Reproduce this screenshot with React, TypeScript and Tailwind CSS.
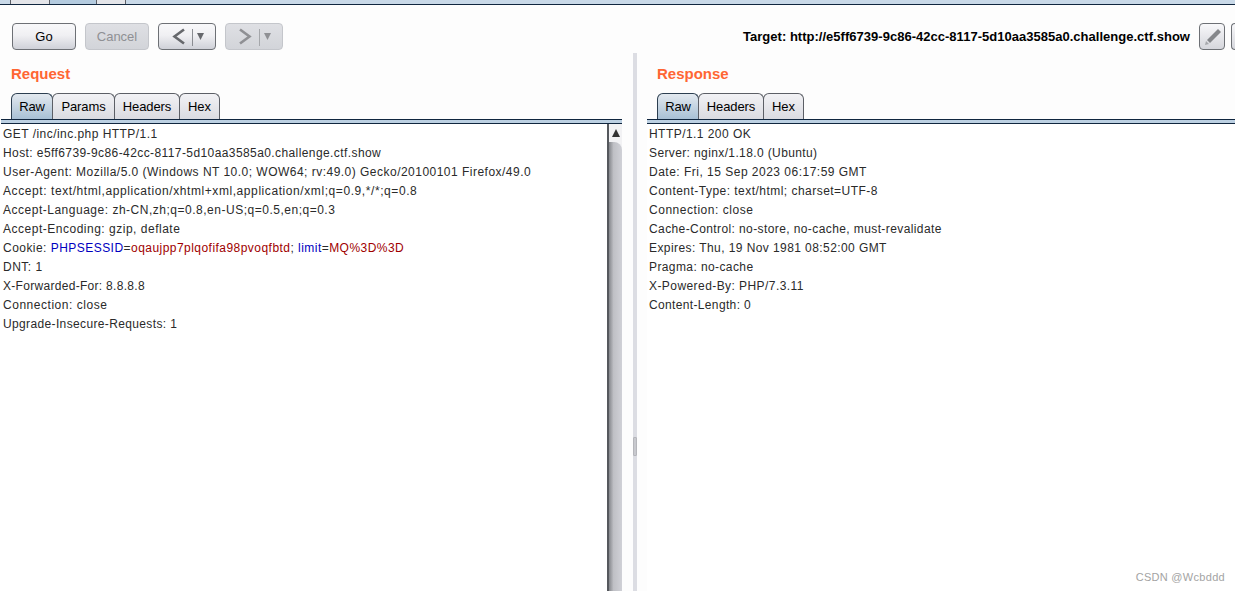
import type { ReactNode } from "react";

const font = "font-['Liberation_Sans',Arial,sans-serif]";

// the reference text was hinted on Windows, so each line gets its own spacing to hit the same width
const requestLines: [string, string][] = [
  ["GET /inc/inc.php HTTP/1.1", "tracking-[0.46px]"],
  ["Host: e5ff6739-9c86-42cc-8117-5d10aa3585a0.challenge.ctf.show", "tracking-[0.41px]"],
  ["User-Agent: Mozilla/5.0 (Windows NT 10.0; WOW64; rv:49.0) Gecko/20100101 Firefox/49.0", "tracking-[0.48px]"],
  ["Accept: text/html,application/xhtml+xml,application/xml;q=0.9,*/*;q=0.8", "tracking-[0.58px]"],
  ["Accept-Language: zh-CN,zh;q=0.8,en-US;q=0.5,en;q=0.3", "tracking-[0.51px]"],
  ["Accept-Encoding: gzip, deflate", "tracking-[0.51px]"],
];

const requestTail: [string, string][] = [
  ["DNT: 1", "tracking-[0.48px]"],
  ["X-Forwarded-For: 8.8.8.8", "tracking-[0.3px]"],
  ["Connection: close", "tracking-[0.53px]"],
  ["Upgrade-Insecure-Requests: 1", "tracking-[0.36px]"],
];

const responseLines: [string, string][] = [
  ["HTTP/1.1 200 OK", "tracking-[0.45px]"],
  ["Server: nginx/1.18.0 (Ubuntu)", "tracking-[0.38px]"],
  ["Date: Fri, 15 Sep 2023 06:17:59 GMT", "tracking-[0.49px]"],
  ["Content-Type: text/html; charset=UTF-8", "tracking-[0.47px]"],
  ["Connection: close", "tracking-[0.53px]"],
  ["Cache-Control: no-store, no-cache, must-revalidate", "tracking-[0.4px]"],
  ["Expires: Thu, 19 Nov 1981 08:52:00 GMT", "tracking-[0.42px]"],
  ["Pragma: no-cache", "tracking-[0.4px]"],
  ["X-Powered-By: PHP/7.3.11", "tracking-[0.43px]"],
  ["Content-Length: 0", "tracking-[0.35px]"],
];

function ToolButton({ children, disabled, width }: { children: ReactNode; disabled?: boolean; width: string }) {
  return (
    <div
      className={`flex h-[27px] ${width} shrink-0 items-center justify-center rounded-[4px] border text-[13px] ${
        disabled
          ? "border-[#c4c6cb] bg-[linear-gradient(#dfe0e4,#d2d4d9)] text-[#8f9094]"
          : "border-[#6d7075] bg-[linear-gradient(#f8f8fa,#f0f0f3_45%,#cfd1d8)] text-black"
      }`}
    >
      {children}
    </div>
  );
}

function ArrowButton({ dir, disabled }: { dir: "left" | "right"; disabled?: boolean }) {
  const color = disabled ? "#8f9094" : "#66686c";
  return (
    <ToolButton disabled={disabled} width="w-[58px]">
      <svg width="56" height="25" viewBox="0 0 56 25" fill="none">
        <path
          d={dir === "left" ? "M25 5.5 L15.5 12.5 L25 19.5" : "M14 5.5 L23.5 12.5 L14 19.5"}
          stroke={color}
          strokeWidth="2.6"
        />
        <path d="M33.5 5 V22" stroke={disabled ? "#a5a7ab" : "#8b8d92"} />
        <path d="M38 9 H45 L41.5 16 Z" fill={color} />
      </svg>
    </ToolButton>
  );
}

function Tabs({ labels }: { labels: [string, number][] }) {
  return (
    <div className="flex h-[26px] items-end">
      {labels.map(([label, w], i) => (
        <div
          key={label}
          style={{ width: w }}
          className={`flex h-[26px] shrink-0 items-center justify-center rounded-t-[6px] border border-b-0 pt-[1px] text-[13px] tracking-[-0.1px] text-black ${
            i === 0
              ? "border-[#2c3e50] bg-[linear-gradient(#e3e9ef,#a8c0d5)]"
              : "-ml-px border-[#5c5f66] bg-[linear-gradient(#f2f2f5,#dadbe1)]"
          }`}
        >
          {label}
        </div>
      ))}
    </div>
  );
}

function Rule() {
  return <div className="h-[5px] shrink-0 border-y border-y-[#10263f] bg-[#bcd0e2]" />;
}

function Line({ children, tracking }: { children: ReactNode; tracking: string }) {
  return <div className={`h-[19px] whitespace-nowrap leading-[19px] ${tracking}`}>{children}</div>;
}

function Scrollbar() {
  return (
    <div className="flex w-[15px] shrink-0 flex-col border-l-2 border-l-[#55585d] bg-[#f2f2f4]">
      <div className="flex h-[18px] shrink-0 items-center justify-center">
        <div className="h-0 w-0 border-x-[4px] border-b-[8px] border-x-transparent border-b-[#333]" />
      </div>
      <div className="flex-1 rounded-tr-[8px] bg-[linear-gradient(90deg,#85878c,#bfc0c5_35%,#d0d1d7)]" />
    </div>
  );
}

export default function App() {
  return (
    <div className={`${font} flex h-[591px] w-[1235px] flex-col overflow-hidden bg-[#fdfdfd] text-[#2a2a2a]`}>
      {/* top tab strip, cut off by the crop */}
      <div className="flex h-[6px] shrink-0 flex-col bg-[#fdfdfd]">
        <div className="flex h-[4px] items-start bg-[#c9d9e8] pl-[10px]">
          <div className="h-[4px] w-[40px] border-x border-[#5c5f66] bg-[#e4e5e9]" />
          <div className="h-[4px] w-[46px] bg-[#b4cbdf]" />
          <div className="h-[4px] w-[30px] border-x border-[#5c5f66] bg-[#e4e5e9]" />
        </div>
        <div className="h-[1px] bg-[#10263f]" />
      </div>

      <div className="flex h-[47px] shrink-0 items-start pl-[12px] pt-[17px]">
        <ToolButton width="w-[64px]">Go</ToolButton>
        <div className="ml-[9px]">
          <ToolButton disabled width="w-[64px]">Cancel</ToolButton>
        </div>
        <div className="ml-[9px]">
          <ArrowButton dir="left" />
        </div>
        <div className="ml-[9px]">
          <ArrowButton dir="right" disabled />
        </div>
        <div className="ml-auto flex items-center">
          <span className="text-[13px] font-bold leading-[27px] tracking-[0.02px] text-black">
            Target: http://e5ff6739-9c86-42cc-8117-5d10aa3585a0.challenge.ctf.show
          </span>
          <div className="ml-[9px] flex h-[27px] w-[26px] items-center justify-center rounded-[4px] border border-[#6d7075] bg-[linear-gradient(#f8f8fa,#d5d6dc)]">
            <svg width="24" height="25" viewBox="0 0 24 25">
              <path d="M18 5 L21 8 L10 19 L7 16 Z" fill="#85878b" />
              <path d="M6 17 L9 20 L5 21 Z" fill="#a5a7ab" />
            </svg>
          </div>
          <div className="ml-[6px] h-[27px] w-[4px] rounded-l-[4px] border border-r-0 border-[#6d7075] bg-[linear-gradient(#f8f8fa,#d5d6dc)]" />
        </div>
      </div>

      <div className="flex min-h-0 flex-1">
        <div className="flex w-[622px] shrink-0 flex-col">
          <div className="pl-[11px] pt-[12px] text-[15px] font-bold leading-[17px] text-[#ff6633]">Request</div>
          <div className="ml-[11px] mt-[11px]">
            <Tabs labels={[["Raw", 42], ["Params", 63], ["Headers", 66], ["Hex", 41]]} />
          </div>
          <div className="ml-px">
            <Rule />
          </div>
          <div className="flex min-h-0 flex-1">
            <div className="min-w-0 flex-1 overflow-hidden bg-white pl-[3px] pt-px text-[12px]">
              {requestLines.map(([l, t]) => (
                <Line key={l} tracking={t}>{l}</Line>
              ))}
              <Line tracking="tracking-[0.46px]">
                Cookie: <span className="text-[#0000c0]">PHPSESSID</span>=
                <span className="text-[#a00000]">oqaujpp7plqofifa98pvoqfbtd</span>;{" "}
                <span className="text-[#0000c0]">limit</span>=<span className="text-[#a00000]">MQ%3D%3D</span>
              </Line>
              {requestTail.map(([l, t]) => (
                <Line key={l} tracking={t}>{l}</Line>
              ))}
            </div>
            <Scrollbar />
          </div>
        </div>

        {/* splitter */}
        <div className="flex w-[25px] shrink-0 justify-center">
          <div className="relative w-[4px] bg-[#dcdde3]">
            <div className="absolute left-0 top-[384px] h-[19px] w-[4px] rounded-[1px] border border-[#b5b6bb] bg-[#c8c9ce]" />
          </div>
        </div>

        <div className="flex min-w-0 flex-1 flex-col">
          <div className="pl-[10px] pt-[12px] text-[15px] font-bold leading-[17px] text-[#ff6633]">Response</div>
          <div className="ml-[10px] mt-[11px]">
            <Tabs labels={[["Raw", 42], ["Headers", 66], ["Hex", 41]]} />
          </div>
          <Rule />
          <div className="relative flex-1 overflow-hidden bg-white pl-[2px] pt-px text-[12px]">
            {responseLines.map(([l, t]) => (
              <Line key={l} tracking={t}>{l}</Line>
            ))}
            <div className="absolute bottom-[7px] right-[10px] text-[11px] leading-[13px] tracking-[0.3px] text-[#a3a3a3]">CSDN @Wcbddd</div>
          </div>
        </div>
      </div>
    </div>
  );
}
